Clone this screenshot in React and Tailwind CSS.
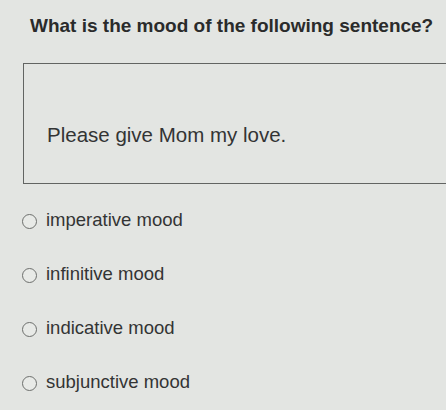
export default function App() {
  const options = [
    "imperative mood",
    "infinitive mood",
    "indicative mood",
    "subjunctive mood",
  ];

  return (
    <div
      className="w-[446px] h-[410px] overflow-hidden bg-[#e3e5e2] text-[#2a2b2b]"
      style={{ fontFamily: '"Liberation Sans", Arial, sans-serif' }}
    >
      <div className="pt-[14px] pl-[30px]">
        <h1 className="text-[19px] font-bold leading-[24px] whitespace-nowrap">
          What is the mood of the following sentence?
        </h1>
      </div>

      <div className="ml-[23px] mt-[25px] -mr-[20px] h-[121px] border border-[#626462] pl-[23px] pt-[59px]">
        <p className="text-[20.5px] leading-[24px] text-[#333434]">
          Please give Mom my love.
        </p>
      </div>

      <div className="pl-[22px] pt-[25px] flex flex-col gap-[30px]">
        {options.map((o) => (
          <label key={o} className="flex items-center gap-[9px] h-[24px]">
            <span className="w-[15px] h-[15px] rounded-full border-[1.5px] border-[#6d6f6d] bg-[#e8eae7]" />
            <span className="text-[18.5px] leading-[24px] text-[#333434] -mt-[2px]">
              {o}
            </span>
          </label>
        ))}
      </div>
    </div>
  );
}
